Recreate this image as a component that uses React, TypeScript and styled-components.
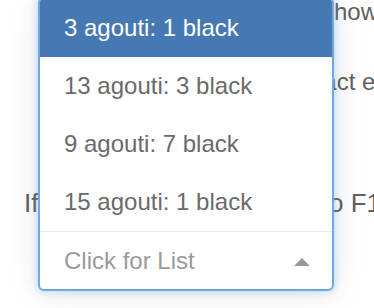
import React from "react";
import styled, { createGlobalStyle } from "styled-components";

const Global = createGlobalStyle`
  html, body { margin: 0; padding: 0; background: #fff; }
  body { overflow: hidden; font-family: "Liberation Sans", Arial, Helvetica, sans-serif; }
`;

const Page = styled.div`
  position: relative;
  width: 374px;
  height: 308px;
  overflow: hidden;
  background: #fff;
`;

const Article = styled.div`
  margin-top: -5px;
  padding-left: 24px;
  color: #606060;
`;

const Line = styled.div<{ $size: number; $gap: number }>`
  display: flex;
  white-space: nowrap;
  font-size: ${(p) => p.$size}px;
  line-height: 34px;
  height: 34px;
  margin-top: ${(p) => p.$gap}px;
`;

const Lead = styled.span<{ $w: number }>`
  flex: 0 0 ${(p) => p.$w}px;
  overflow: hidden;
`;

const Tail = styled.span`
  flex: 0 0 auto;
`;

const Select = styled.div`
  position: absolute;
  top: -3px;
  left: 38px;
  width: 296px;
  box-sizing: border-box;
  border: 2px solid #72a8e2;
  border-radius: 6px;
  background: #fff;
  overflow: hidden;
  box-shadow: 0 0 8px rgba(102, 168, 233, 0.45), 0 4px 34px rgba(0, 0, 0, 0.09);
`;

const Option = styled.div<{ $selected?: boolean }>`
  height: 58px;
  display: flex;
  align-items: center;
  padding-left: 24px;
  font-size: 24px;
  color: ${(p) => (p.$selected ? "#fff" : "#6a6a6a")};
  background: ${(p) => (p.$selected ? "#4679b4" : "#fff")};
`;

const Footer = styled.div`
  height: 57px;
  border-top: 1px solid #e6e6e6;
  display: flex;
  align-items: center;
  justify-content: space-between;
  padding: 0 22px 0 24px;
  font-size: 24px;
  color: #9a9a9a;
`;

const Caret = styled.span`
  width: 0;
  height: 0;
  margin-top: 3px;
  border-left: 8px solid transparent;
  border-right: 8px solid transparent;
  border-bottom: 8px solid #999;
`;

const options = [
  "3 agouti: 1 black",
  "13 agouti: 3 black",
  "9 agouti: 7 black",
  "15 agouti: 1 black",
];

export default function App() {
  return (
    <Page>
      <Global />
      <Article>
        <Line $size={24} $gap={0}>
          <Lead $w={310} />
          <Tail>how</Tail>
        </Line>
        <Line $size={24} $gap={36}>
          <Lead $w={274} />
          <Tail>exact e</Tail>
        </Line>
        <Line $size={26} $gap={87}>
          <Lead $w={305}>If</Lead>
          <Tail>o F1</Tail>
        </Line>
      </Article>
      <Select>
        {options.map((o, i) => (
          <Option key={o} $selected={i === 0}>
            {o}
          </Option>
        ))}
        <Footer>
          <span>Click for List</span>
          <Caret />
        </Footer>
      </Select>
    </Page>
  );
}
